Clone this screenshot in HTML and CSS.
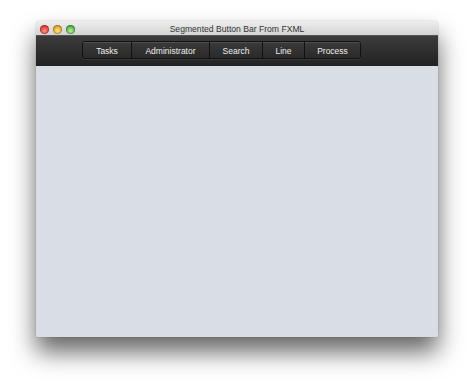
FILE: index.html
```html
<!DOCTYPE html>
<html lang="en">
<head>
    <meta charset="UTF-8">
    <title>Segmented Button Bar From FXML</title>
    <link rel="stylesheet" href="styles.css">
</head>
<body>
    <div class="window">
        <div class="titlebar">
            <div class="lights">
                <span class="light close"></span>
                <span class="light min"></span>
                <span class="light max"></span>
            </div>
            <div class="title">Segmented Button Bar From FXML</div>
        </div>
        <div class="toolbar">
            <div class="segmented">
                <button class="seg seg-tasks">Tasks</button>
                <button class="seg seg-admin">Administrator</button>
                <button class="seg seg-search">Search</button>
                <button class="seg seg-line">Line</button>
                <button class="seg seg-process">Process</button>
            </div>
        </div>
        <div class="content"></div>
    </div>
</body>
</html>
```

FILE: styles.css
```css
* {
    margin: 0;
    padding: 0;
    box-sizing: border-box;
}

html,
body {
    min-height: 387px;
}

body {
    background: #ffffff;
    font-family: "Liberation Sans", Arial, sans-serif;
    padding: 21px 0 0 36px;
}

.window {
    width: 402px;
    height: 316px;
    display: flex;
    flex-direction: column;
    border-radius: 4px 4px 2px 2px;
    overflow: hidden;
    box-shadow: 0 15px 24px rgba(0, 0, 0, 0.6), 0 0 1px rgba(0, 0, 0, 0.5);
}

.titlebar {
    height: 15px;
    display: flex;
    align-items: center;
    background: linear-gradient(#eeeeee, #d3d3d3);
    border-bottom: 1px solid #555;
}

.lights {
    display: flex;
    gap: 4px;
    padding-left: 4px;
    padding-top: 2px;
    width: 60px;
}

.light {
    width: 9px;
    height: 9px;
    border-radius: 50%;
    box-shadow: inset 0 0 0 1px rgba(0, 0, 0, 0.25);
}

.close {
    background: radial-gradient(circle at 50% 65%, #ff8f88, #d8322c 70%);
}

.min {
    background: radial-gradient(circle at 50% 65%, #ffe48a, #d99c1a 70%);
}

.max {
    background: radial-gradient(circle at 50% 65%, #b7f2a0, #4aa53a 70%);
}

.title {
    flex: 1;
    text-align: center;
    font-size: 8.6px;
    color: #333333;
    margin-right: 60px;
    padding-top: 2px;
}

.toolbar {
    height: 30px;
    background: linear-gradient(#3c3c3c, #222222);
    padding: 5px 0 0 46px;
}

.segmented {
    display: flex;
    height: 18px;
    border: 1px solid #111;
    border-radius: 3px;
    overflow: hidden;
    width: 279px;
    box-shadow: 0 1px 0 rgba(255, 255, 255, 0.08);
}

.seg {
    background: linear-gradient(#3a3a3a, #2a2a2a);
    color: #eeeeee;
    border: none;
    border-right: 1px solid #111;
    box-shadow: inset 0 1px 0 rgba(255, 255, 255, 0.12);
    font-family: "Liberation Sans", Arial, sans-serif;
    font-size: 8.5px;
    line-height: 17px;
    padding-top: 1px;
    text-align: center;
}

.seg:last-child {
    border-right: none;
}

.seg-tasks { width: 49px; }
.seg-admin { width: 78px; }
.seg-search { width: 53px; }
.seg-line { width: 42px; }
.seg-process { flex: 1; }

.content {
    flex: 1;
    background: #d9dde4;
}
```
